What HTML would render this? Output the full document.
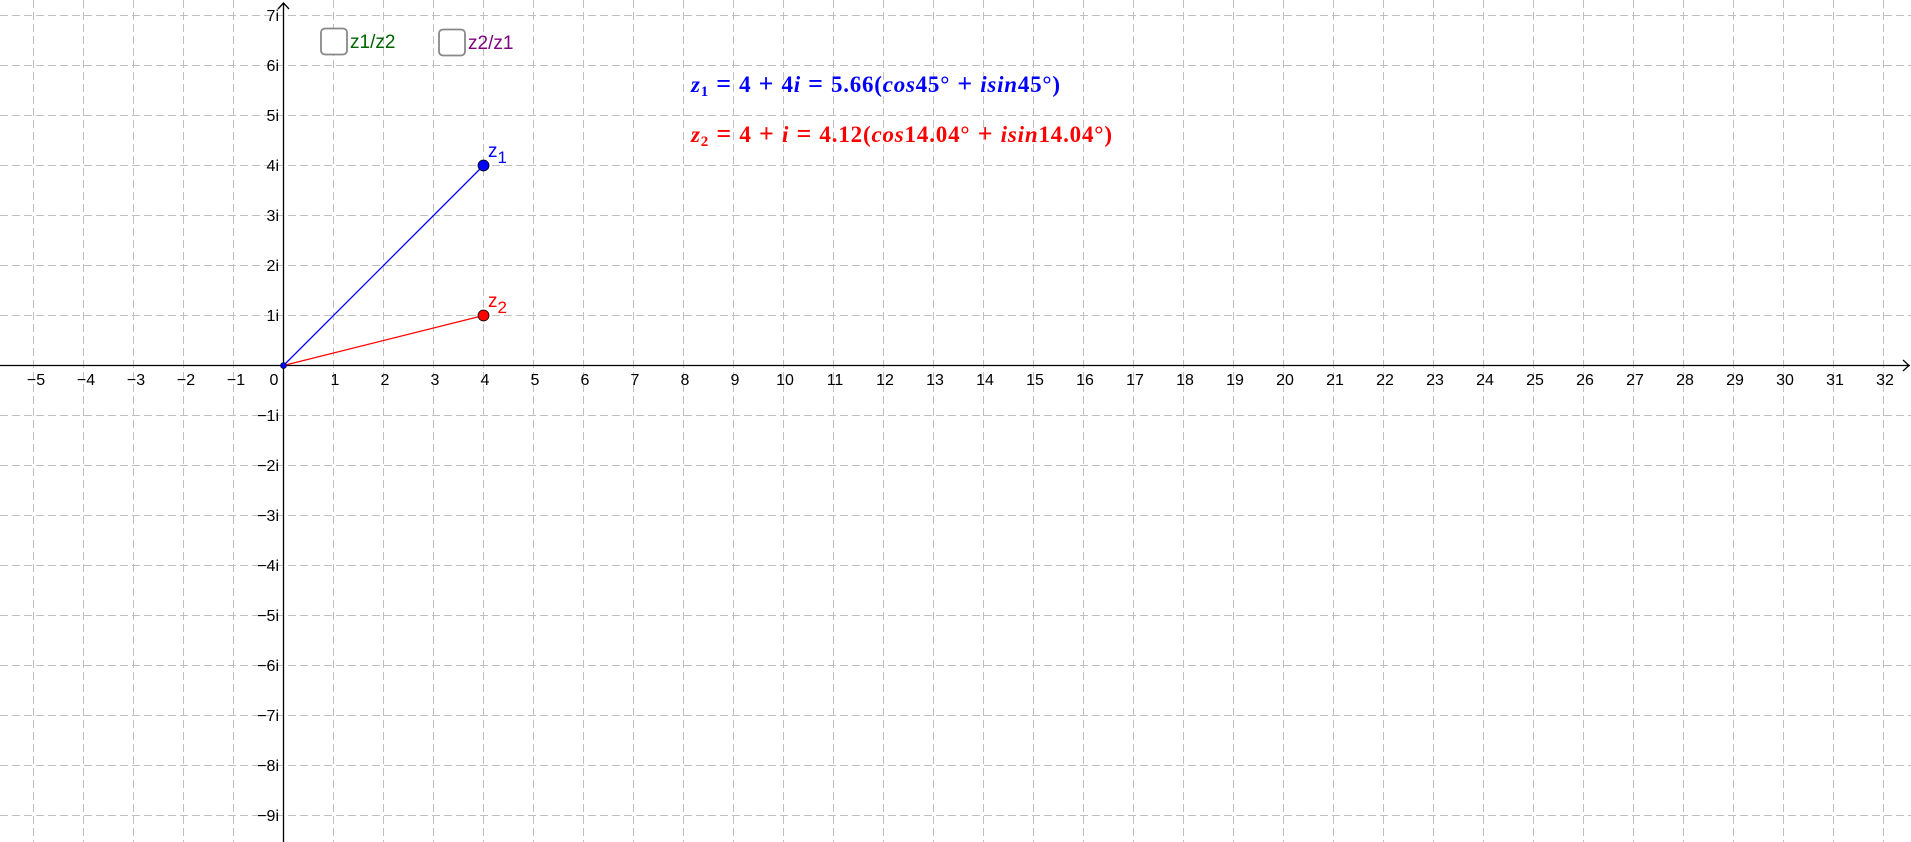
<!DOCTYPE html>
<html><head><meta charset="utf-8"><style>
html,body{margin:0;padding:0;background:#fff;width:1911px;height:842px;overflow:hidden}
svg{display:block}
.ax{font-family:"Liberation Sans",sans-serif;font-size:16px;fill:#000}
.cb{font-family:"Liberation Sans",sans-serif;font-size:19px}
.f{font-family:"Liberation Serif",serif;font-size:23px;font-weight:bold}
.it{font-style:italic}
</style></head><body>
<svg width="1911" height="842" viewBox="0 0 1911 842" xmlns="http://www.w3.org/2000/svg">
<g stroke="#c0c0c0" stroke-width="1" stroke-dasharray="8,4" fill="none">
<path d="M33.5 0V842M83.5 0V842M133.5 0V842M183.5 0V842M233.5 0V842M333.5 0V842M383.5 0V842M433.5 0V842M483.5 0V842M533.5 0V842M583.5 0V842M633.5 0V842M683.5 0V842M733.5 0V842M783.5 0V842M833.5 0V842M883.5 0V842M933.5 0V842M983.5 0V842M1033.5 0V842M1083.5 0V842M1133.5 0V842M1183.5 0V842M1233.5 0V842M1283.5 0V842M1333.5 0V842M1383.5 0V842M1433.5 0V842M1483.5 0V842M1533.5 0V842M1583.5 0V842M1633.5 0V842M1683.5 0V842M1733.5 0V842M1783.5 0V842M1833.5 0V842M1883.5 0V842"/>
<path d="M0 15.5H1911M0 65.5H1911M0 115.5H1911M0 165.5H1911M0 215.5H1911M0 265.5H1911M0 315.5H1911M0 415.5H1911M0 465.5H1911M0 515.5H1911M0 565.5H1911M0 615.5H1911M0 665.5H1911M0 715.5H1911M0 765.5H1911M0 815.5H1911"/>
</g>
<g stroke="#000" stroke-width="1.3" fill="none">
<path d="M0 365.5H1910M1903 360L1909 365.5L1903 371"/>
<path d="M283.5 842V3M278 9L283.5 3L289 9"/>
</g>
<g class="ax" text-anchor="middle">
<text x="36" y="385">−5</text><text x="86" y="385">−4</text><text x="136" y="385">−3</text><text x="186" y="385">−2</text><text x="236" y="385">−1</text>
<text x="274" y="385">0</text>
<text x="335" y="385">1</text><text x="385" y="385">2</text><text x="435" y="385">3</text><text x="485" y="385">4</text><text x="535" y="385">5</text><text x="585" y="385">6</text><text x="635" y="385">7</text><text x="685" y="385">8</text><text x="735" y="385">9</text>
<text x="785" y="385">10</text><text x="835" y="385">11</text><text x="885" y="385">12</text><text x="935" y="385">13</text><text x="985" y="385">14</text><text x="1035" y="385">15</text><text x="1085" y="385">16</text><text x="1135" y="385">17</text><text x="1185" y="385">18</text><text x="1235" y="385">19</text><text x="1285" y="385">20</text><text x="1335" y="385">21</text><text x="1385" y="385">22</text><text x="1435" y="385">23</text><text x="1485" y="385">24</text><text x="1535" y="385">25</text><text x="1585" y="385">26</text><text x="1635" y="385">27</text><text x="1685" y="385">28</text><text x="1735" y="385">29</text><text x="1785" y="385">30</text><text x="1835" y="385">31</text><text x="1885" y="385">32</text>
</g>
<g class="ax" text-anchor="end">
<text x="279" y="21">7i</text><text x="279" y="71">6i</text><text x="279" y="121">5i</text><text x="279" y="171">4i</text><text x="279" y="221">3i</text><text x="279" y="271">2i</text><text x="279" y="321">1i</text>
<text x="279" y="421">−1i</text><text x="279" y="471">−2i</text><text x="279" y="521">−3i</text><text x="279" y="571">−4i</text><text x="279" y="621">−5i</text><text x="279" y="671">−6i</text><text x="279" y="721">−7i</text><text x="279" y="771">−8i</text><text x="279" y="821">−9i</text>
</g>
<line x1="283.5" y1="365.5" x2="483.5" y2="165.5" stroke="#0000ff" stroke-width="1.3"/>
<line x1="283.5" y1="365.5" x2="483.5" y2="315.5" stroke="#ff0000" stroke-width="1.3"/>
<circle cx="283.5" cy="365.5" r="3" fill="#0000ff" stroke="#000" stroke-width="0.6"/>
<circle cx="483.5" cy="165.5" r="5.5" fill="#0000ff" stroke="#000" stroke-width="0.8"/>
<circle cx="483.5" cy="315.5" r="5.5" fill="#ff0000" stroke="#000" stroke-width="0.8"/>
<text x="488" y="157" font-family="Liberation Sans,sans-serif" font-size="19" fill="#0000ff">z<tspan font-size="17" dy="6">1</tspan></text>
<text x="488" y="307" font-family="Liberation Sans,sans-serif" font-size="19" fill="#ff0000">z<tspan font-size="17" dy="6">2</tspan></text>
<rect x="321" y="28.5" width="26" height="26" rx="4" fill="#fff" stroke="#888" stroke-width="1.8"/>
<text class="cb" x="350" y="48" fill="#006400">z1/z2</text>
<rect x="439" y="29.5" width="26" height="26" rx="4" fill="#fff" stroke="#888" stroke-width="1.8"/>
<text class="cb" x="468" y="49" fill="#800080">z2/z1</text>
<text class="f" x="691" y="92" fill="#0000ff" textLength="369" lengthAdjust="spacing"><tspan class="it">z</tspan><tspan font-size="15" dy="4">1</tspan><tspan dy="-4" font-size="26"> = </tspan>4<tspan font-size="26"> + </tspan>4<tspan class="it">i</tspan><tspan font-size="26"> = </tspan>5.66(<tspan class="it">cos</tspan>45°<tspan font-size="26"> + </tspan><tspan class="it">isin</tspan>45°)</text>
<text class="f" x="691" y="142" fill="#ff0000" textLength="421" lengthAdjust="spacing"><tspan class="it">z</tspan><tspan font-size="15" dy="4">2</tspan><tspan dy="-4" font-size="26"> = </tspan>4<tspan font-size="26"> + </tspan><tspan class="it">i</tspan><tspan font-size="26"> = </tspan>4.12(<tspan class="it">cos</tspan>14.04°<tspan font-size="26"> + </tspan><tspan class="it">isin</tspan>14.04°)</text>
</svg>
</body></html>
